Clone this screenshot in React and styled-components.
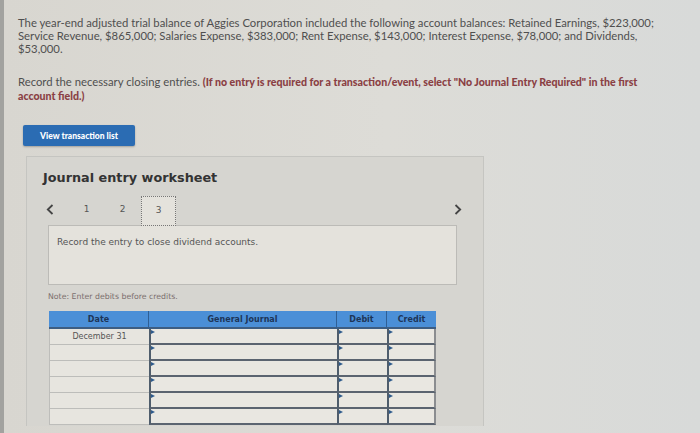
import styled, { createGlobalStyle } from 'styled-components';

const rows = ['December 31', '', '', '', '', ''];

const Chevron = ({ dir }) => (
  <svg width="8" height="11" viewBox="0 0 8 11">
    <path
      d={dir === 'left' ? 'M6.5 1 L1.8 5.5 L6.5 10' : 'M1.5 1 L6.2 5.5 L1.5 10'}
      fill="none"
      stroke="#444"
      strokeWidth="1.8"
    />
  </svg>
);

const App = () => {
  return (
    <Page>
      <GlobalStyle />
      <Question>
        The year-end adjusted trial balance of Aggies Corporation included the following account balances: Retained Earnings, $223,000;<br />
        Service Revenue, $865,000; Salaries Expense, $383,000; Rent Expense, $143,000; Interest Expense, $78,000; and Dividends,<br />
        $53,000.
      </Question>
      <Question space>
        Record the necessary closing entries. <Hint>(If no entry is required for a transaction/event, select "No Journal Entry Required" in the first<br />account field.)</Hint>
      </Question>

      <ListButton>View transaction list</ListButton>

      <Panel>
        <Title>Journal entry worksheet</Title>
        <Pager>
          <Arrow><Chevron dir="left" /></Arrow>
          <Tab>1</Tab>
          <Tab>2</Tab>
          <Tab active>3</Tab>
          <Arrow right><Chevron dir="right" /></Arrow>
        </Pager>
        <RecordBox>Record the entry to close dividend accounts.</RecordBox>
        <Note>Note: Enter debits before credits.</Note>
        <Table>
          <Head>Date</Head>
          <Head>General Journal</Head>
          <Head>Debit</Head>
          <Head last>Credit</Head>
          {rows.map((date, i) => (
            <Row key={i}>
              <DateCell>{date}</DateCell>
              <EntryCell />
              <EntryCell />
              <EntryCell last />
            </Row>
          ))}
        </Table>
      </Panel>
    </Page>
  );
};

const GlobalStyle = createGlobalStyle`
  body {
    margin: 0;
    background: #dbdad5;
  }
`;

const Page = styled.div`
  min-height: 433px;
  box-sizing: border-box;
  border-left: 4px solid #a2a29f;
  background: linear-gradient(90deg, #d8d6d0 0%, #dddcd7 55%, #d8dad9 100%);
  padding: 16px 0 0 14px;
  font-family: Lato, 'Open Sans', sans-serif;
  color: #4f4f4f;
  overflow: hidden;
`;

const Question = styled.p`
  margin: ${props => (props.space ? '20px 0 0' : '0')};
  font-size: 11.3px;
  line-height: 13px;
  white-space: nowrap;
`;

const Hint = styled.b`
  font-size: 10.6px;
  font-weight: 900;
  color: #8a4044;
`;

const ListButton = styled.div`
  display: flex;
  align-items: center;
  justify-content: center;
  width: 112px;
  height: 21px;
  margin: 22px 0 0 5px;
  background: #2b6cb3;
  border-radius: 2px;
  color: #fff;
  font-size: 8.5px;
  font-weight: 900;
  box-shadow: 0 1px 2px rgba(0, 0, 0, 0.25);
`;

const Panel = styled.div`
  box-sizing: border-box;
  width: 458px;
  height: 270px;
  margin: 10px 0 0 8px;
  padding: 13px 17px 0 16px;
  background: #d6d5d0;
  border: 1px solid #c5c5c1;
  border-bottom: none;
`;

const Title = styled.h2`
  margin: 0;
  font-family: 'DejaVu Sans', Verdana, sans-serif;
  font-size: 12.8px;
  line-height: 16px;
  font-weight: bold;
  color: #333;
`;

const Pager = styled.div`
  display: flex;
  align-items: stretch;
  gap: 1px;
  height: 30px;
  margin-top: 10px;
`;

const Arrow = styled.div`
  display: flex;
  align-items: flex-start;
  padding-top: 8px;
  ${props => (props.right ? 'margin-left: auto; padding-right: 4px;' : 'width: 22px; padding-left: 3px;')}
`;

const Tab = styled.div`
  box-sizing: border-box;
  width: 35px;
  padding-top: 8px;
  text-align: center;
  font-family: 'DejaVu Sans', Verdana, sans-serif;
  font-size: 9px;
  color: #555;
  ${props => props.active && `
    background: #e4e2dc;
    border: 1px dotted #777;
    position: relative;
    z-index: 1;
  `}
`;

const RecordBox = styled.div`
  box-sizing: border-box;
  width: 409px;
  height: 60px;
  margin: -1px 0 0 5px;
  padding: 11px 8px;
  background: #e4e2dc;
  border: 1px solid #bcbbb7;
  font-family: 'DejaVu Sans', Verdana, sans-serif;
  font-size: 9px;
  color: #555;
`;

const Note = styled.div`
  margin: 7px 0 0 5px;
  font-family: 'DejaVu Sans', Verdana, sans-serif;
  font-size: 7.8px;
  color: #7b6f6e;
`;

const Table = styled.div`
  display: grid;
  grid-template-columns: 100px 188px 50px 49px;
  width: 387px;
  margin: 10px 0 0 6px;
`;

const Head = styled.div`
  box-sizing: border-box;
  height: 18px;
  display: flex;
  align-items: center;
  justify-content: center;
  background: #4b8fd7;
  border-right: ${props => (props.last ? 'none' : '1px solid #2f5f95')};
  border-bottom: 2px solid #3d5d82;
  font-family: 'DejaVu Sans', Verdana, sans-serif;
  font-size: 8px;
  font-weight: bold;
  color: #1d3557;
`;

const Row = styled.div`
  display: contents;
`;

const DateCell = styled.div`
  box-sizing: border-box;
  height: 16px;
  display: flex;
  align-items: center;
  justify-content: center;
  background: #e7e5df;
  border-left: 1px solid #bdbdba;
  border-bottom: 1px solid #bdbdba;
  font-family: 'DejaVu Sans', Verdana, sans-serif;
  font-size: 8px;
  color: #555;
`;

const EntryCell = styled.div`
  position: relative;
  box-sizing: border-box;
  height: 16px;
  background: #e9e7e1;
  border-left: 2px solid #4f5d6c;
  border-bottom: 2px solid #5b6470;
  border-right: ${props => (props.last ? '2px solid #8b8d90' : 'none')};

  &::before {
    content: '';
    position: absolute;
    top: 1px;
    left: 0;
    border-top: 2px solid transparent;
    border-bottom: 2px solid transparent;
    border-left: 4px solid #2f5b8c;
  }
`;

export default App;
